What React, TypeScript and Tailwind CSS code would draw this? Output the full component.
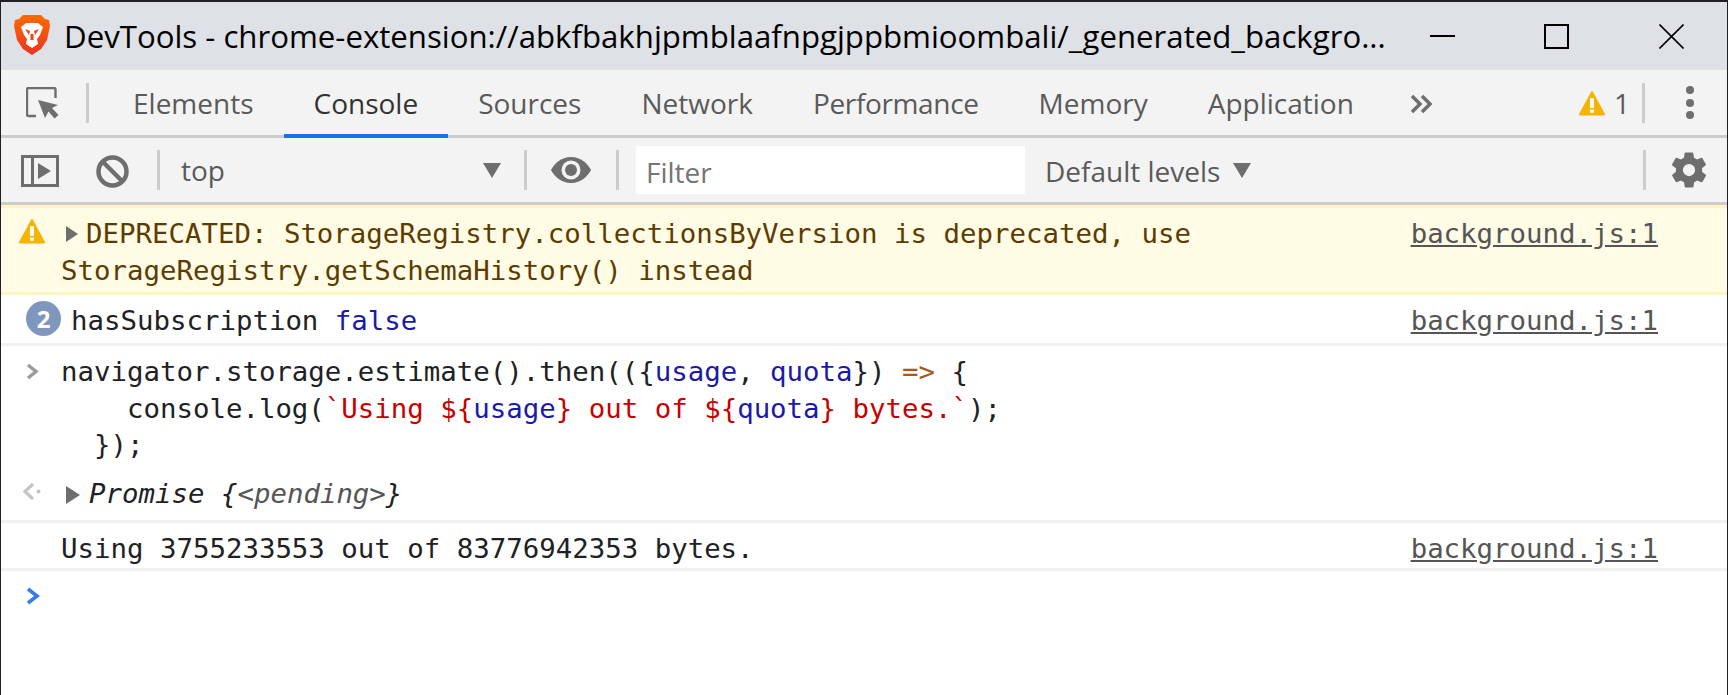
const ui = "font-['Open_Sans',sans-serif]";
const mono = "font-['DejaVu_Sans_Mono',monospace] text-[27.4px] leading-[36.5px]";

function BraveLogo() {
  return (
    <svg width="36" height="40" viewBox="0 0 36 40">
      <defs>
        <linearGradient id="brave" x1="0" y1="0" x2="0" y2="1">
          <stop offset="0" stopColor="#ff6a00" />
          <stop offset="1" stopColor="#ea3320" />
        </linearGradient>
      </defs>
      <path d="M9 0 H27 L31 4 L35 5 L36 11 L33 25 L27 34 L18 40 L9 34 L3 25 L0 11 L1 5 L5 4 Z" fill="url(#brave)" />
      <path d="M7 12 L12 8 H24 L29 12 L26 20 L23 24 L24 29 L18 33 L12 29 L13 24 L10 20 Z" fill="#fff" />
      <path d="M11 14 L16 16 L15 20 Z M25 14 L20 16 L21 20 Z M16.5 19 V25 H19.5 V19 Z" fill="#f1431d" />
    </svg>
  );
}

function WarnIcon({ size }: { size: number }) {
  return (
    <svg width={size} height={size} viewBox="0 0 24 24">
      <path d="M12 2 L23 22.5 H1 Z" fill="#f4b400" stroke="#f4b400" strokeWidth="2" strokeLinejoin="round" />
      <rect x="10.2" y="7.5" width="3.6" height="9" fill="#fff" />
      <rect x="10.2" y="18" width="3.6" height="3" fill="#fff" />
    </svg>
  );
}

function Sep() {
  return <div className="w-[3px] h-10 bg-[#cccccc] shrink-0" />;
}

function Caret() {
  return <div className="w-0 h-0 border-y-[8px] border-y-transparent border-l-[12px] border-l-[#6e6e6e] shrink-0" />;
}

function SourceLink() {
  return <span className="underline text-[#555555] shrink-0">background.js:1</span>;
}

const tabs = ["Elements", "Console", "Sources", "Network", "Performance", "Memory", "Application"];

export default function App() {
  return (
    <div className="h-[695px] w-[1728px] bg-white border-t-2 border-x border-[#202124] overflow-hidden flex flex-col">
      {/* title bar */}
      <div className={`h-[68px] shrink-0 bg-[#dee1e6] flex items-center text-black ${ui}`}>
        <div className="ml-[13px] w-[50px] -mt-[2px]">
          <BraveLogo />
        </div>
        <span className="text-[31.2px] whitespace-nowrap w-[1366px]">
          DevTools - chrome-extension://abkfbakhjpmblaafnpgjppbmioombali/_generated_backgro...
        </span>
        <div className="w-[25px] h-0.5 bg-black" />
        <div className="ml-[89px] w-[25px] h-[25px] border-2 border-black" />
        <svg className="ml-[90px]" width="25" height="25" viewBox="0 0 25 25">
          <path d="M0.5 0.5 L24.5 24.5 M24.5 0.5 L0.5 24.5" stroke="#000" strokeWidth="1.6" />
        </svg>
      </div>

      {/* tabs */}
      <div className={`h-[68px] shrink-0 bg-[#f3f3f3] border-b-[3px] border-[#cccccc] flex items-center text-[#5a5a5a] text-[28px] ${ui}`}>
        <svg className="ml-[25px]" width="33" height="32" viewBox="0 0 33 32" fill="none">
          <path d="M10 29 H2.5 Q1 29 1 27.5 V2.5 Q1 1 2.5 1 H28 Q29.5 1 29.5 2.5 V11" stroke="#6e6e6e" strokeWidth="2.4" />
          <path d="M12 13 L32 18 L26 21 L32.5 28 L28.5 31.5 L22.5 24.5 L19 31 Z" fill="#6e6e6e" />
        </svg>
        <div className="ml-[27px]">
          <Sep />
        </div>
        <div className="ml-[14px] flex h-full">
          {tabs.map((t) => (
            <div
              key={t}
              className={`px-[30px] flex items-center relative ${t === "Console" ? "text-[#333333]" : ""} ${
                t === "Performance" ? "tracking-[-0.35px]" : ""
              }`}
            >
              {t}
              {t === "Console" && <div className="absolute left-0 right-0 bottom-[-3px] h-1 bg-[#1a73e8]" />}
            </div>
          ))}
        </div>
        <svg className="ml-[25px] mt-[2px]" width="24" height="20" viewBox="0 0 24 20" fill="none">
          <path d="M3 2 L11 10 L3 18 M13 2 L21 10 L13 18" stroke="#6e6e6e" strokeWidth="3.5" />
        </svg>
        <div className="ml-auto flex items-center">
          <WarnIcon size={26} />
          <span className="ml-[9px] text-[#5a5a5a]">1</span>
          <div className="ml-3">
            <Sep />
          </div>
          <div className="ml-[41px] mr-[33px] flex flex-col gap-[4.5px]">
            <div className="w-2 h-2 rounded-full bg-[#6e6e6e]" />
            <div className="w-2 h-2 rounded-full bg-[#6e6e6e]" />
            <div className="w-2 h-2 rounded-full bg-[#6e6e6e]" />
          </div>
        </div>
      </div>

      {/* console toolbar */}
      <div className={`h-[67px] shrink-0 bg-[#f3f3f3] border-b-[3px] border-[#cccccc] flex items-center text-[#5a5a5a] text-[28px] ${ui}`}>
        <svg className="ml-5 mt-[2px]" width="38" height="32" viewBox="0 0 38 32" fill="none">
          <rect x="1.5" y="1.5" width="35" height="29" stroke="#6e6e6e" strokeWidth="3" />
          <path d="M11.5 1.5 V30.5" stroke="#6e6e6e" strokeWidth="3" />
          <path d="M17 8 L30 16 L17 24 Z" fill="#6e6e6e" />
        </svg>
        <svg className="ml-[37px] mt-[2px]" width="33" height="33" viewBox="0 0 33 33" fill="none">
          <circle cx="16.5" cy="16.5" r="14" stroke="#6e6e6e" strokeWidth="4.5" />
          <path d="M6.5 6.5 L26.5 26.5" stroke="#6e6e6e" strokeWidth="4.5" />
        </svg>
        <div className="ml-[28px]">
          <Sep />
        </div>
        <span className="ml-[21px] w-[302px]">top</span>
        <div className="w-0 h-0 border-x-[9px] border-x-transparent border-t-[15px] border-t-[#6e6e6e]" />
        <div className="ml-[23px]">
          <Sep />
        </div>
        <svg className="ml-[23px]" width="42" height="28" viewBox="0 0 42 28">
          <path d="M21 1 C31 1 38 8 41 14 C38 20 31 27 21 27 C11 27 4 20 1 14 C4 8 11 1 21 1 Z" fill="#6e6e6e" />
          <circle cx="21" cy="14" r="9.5" fill="#f3f3f3" />
          <circle cx="21" cy="14" r="6" fill="#6e6e6e" />
        </svg>
        <div className="ml-[24px]">
          <Sep />
        </div>
        <div className="ml-[17px] w-[389px] h-12 bg-white pl-[10px] pt-1 flex items-center text-[#757575]">Filter</div>
        <span className="ml-[20px] pt-[2px]">Default levels</span>
        <div className="ml-[13px] w-0 h-0 border-x-[9px] border-x-transparent border-t-[15px] border-t-[#6e6e6e]" />
        <div className="ml-auto flex items-center">
          <Sep />
          <svg className="ml-[22px] mr-[17px]" width="42" height="42" viewBox="0 0 24 24">
            <path
              fill="#6e6e6e"
              d="M19.4 13c.04-.32.1-.66.1-1s-.06-.68-.1-1l2.1-1.65c.2-.15.25-.42.13-.64l-2-3.46c-.12-.22-.4-.3-.6-.22l-2.5 1c-.52-.4-1.08-.73-1.7-.98l-.37-2.65A.5.5 0 0 0 14 2h-4a.5.5 0 0 0-.5.42l-.37 2.65c-.62.25-1.18.6-1.7.98l-2.5-1c-.22-.08-.48 0-.6.22l-2 3.46c-.13.22-.07.5.13.64L4.6 11c-.04.32-.1.66-.1 1s.06.68.1 1l-2.1 1.65c-.2.15-.25.42-.13.64l2 3.46c.12.22.4.3.6.22l2.5-1c.52.4 1.08.73 1.7.98l.37 2.65c.04.24.25.42.5.42h4c.25 0 .46-.18.5-.42l.37-2.65c.62-.25 1.18-.6 1.7-.98l2.5 1c.22.08.48 0 .6-.22l2-3.46c.13-.22.07-.5-.13-.64L19.4 13zM12 15.5a3.5 3.5 0 1 1 0-7 3.5 3.5 0 0 1 0 7z"
            />
          </svg>
        </div>
      </div>

      {/* console messages */}
      <div className={`text-[#202124] whitespace-pre ${mono}`}>
        <div className="h-[90px] bg-[#fffbe5] border-y-[3px] border-[#fff5c2] text-[#5c3c00] flex pt-[8px] pr-[69px]">
          <div className="ml-[18px] mt-[2px] w-[26px] h-[26px]">
            <WarnIcon size={26} />
          </div>
          <div className="flex-1 ml-[17px]">
            <div className="flex items-center">
              <div className="ml-1 mr-2">
                <Caret />
              </div>
              DEPRECATED: StorageRegistry.collectionsByVersion is deprecated, use
            </div>
            <div className="-ml-px">StorageRegistry.getSchemaHistory() instead</div>
          </div>
          <SourceLink />
        </div>

        <div className="h-[51px] border-b-[3px] border-[#f0f0f0] flex pt-[8px] pr-[69px]">
          <div className="ml-[25px] w-[35px] h-[35px] -mt-[2px] rounded-full bg-[#7f97bf] text-white text-[24px] leading-[35px] font-bold text-center font-['Open_Sans',sans-serif]">
            2
          </div>
          <div className="flex-1 ml-[10px]">
            hasSubscription <span className="text-[#1a1aa6]">false</span>
          </div>
          <SourceLink />
        </div>

        <div className="h-[129px] flex pt-[8px]">
          <svg className="ml-[25px] mt-[9px] shrink-0" width="13" height="17" viewBox="0 0 13 17" fill="none">
            <path d="M2 2 L10 8.5 L2 15" stroke="#9a9a9a" strokeWidth="3.4" />
          </svg>
          <div className="ml-[22px]">
            <div>
              navigator.storage.estimate().then(({"{"}
              <span className="text-[#1a1aa6]">usage</span>, <span className="text-[#1a1aa6]">quota</span>
              {"}) "}
              <span className="text-[#a85a1e]">{"=>"}</span> {"{"}
            </div>
            <div>
              {"    console.log("}
              <span className="text-[#c80000]">{"`Using ${"}</span>
              <span className="text-[#1a1aa6]">usage</span>
              <span className="text-[#c80000]">{"} out of ${"}</span>
              <span className="text-[#1a1aa6]">quota</span>
              <span className="text-[#c80000]">{"} bytes.`"}</span>
              {");"}
            </div>
            <div>{"  });"}</div>
          </div>
        </div>

        <div className="h-[48px] border-b-[3px] border-[#f0f0f0] flex pt-px">
          <svg className="ml-[21px] mt-[6px] shrink-0" width="19" height="19" viewBox="0 0 19 19" fill="none">
            <path d="M11 2 L3 9.5 L11 17" stroke="#c4c4c4" strokeWidth="3.2" />
            <circle cx="16.5" cy="9.5" r="2" fill="#c4c4c4" />
          </svg>
          <div className="ml-[25px] mt-[10px] w-0 h-0 border-y-[9px] border-y-transparent border-l-[14px] border-l-[#6e6e6e]" />
          <div className="ml-[9px] italic">
            Promise {"{"}
            <span className="text-[#555555]">{"<pending>"}</span>
            {"}"}
          </div>
        </div>

        <div className="h-[48px] border-b-[3px] border-[#f0f0f0] flex justify-between pt-[8px] pl-[60px] pr-[69px]">
          <span>Using 3755233553 out of 83776942353 bytes.</span>
          <SourceLink />
        </div>

        <div className="pt-4 pl-[25px]">
          <svg width="14" height="18" viewBox="0 0 14 18" fill="none">
            <path d="M2 2 L11 9 L2 16" stroke="#367cf1" strokeWidth="3.6" />
          </svg>
        </div>
      </div>
    </div>
  );
}
